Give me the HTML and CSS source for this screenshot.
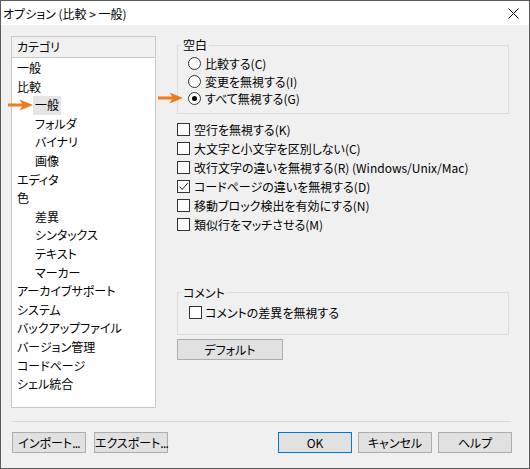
FILE: index.html
```html
<!DOCTYPE html>
<html>
<head>
    <meta charset="UTF-8">
    <title>オプション (比較 &gt; 一般)</title>
    <link rel="stylesheet" href="styles.css">
</head>
<body>
    <div class="window">
        <!-- Title bar -->
        <div class="titlebar">
            <span class="title">オプション (比較 &gt; 一般)</span>
            <svg class="close-icon" width="11" height="11" viewBox="0 0 11 11">
                <path d="M0.5 0.5 L10.5 10.5 M10.5 0.5 L0.5 10.5" stroke="#000" stroke-width="1" fill="none"/>
            </svg>
        </div>

        <div class="content">
            <div class="main">
                <!-- Category tree -->
                <div class="category">
                    <div class="category-header">カテゴリ</div>
                    <ul class="category-list">
                        <li>一般</li>
                        <li>比較</li>
                        <li class="sub"><span class="selected">一般</span></li>
                        <li class="sub">フォルダ</li>
                        <li class="sub">バイナリ</li>
                        <li class="sub">画像</li>
                        <li>エディタ</li>
                        <li>色</li>
                        <li class="sub">差異</li>
                        <li class="sub">シンタックス</li>
                        <li class="sub">テキスト</li>
                        <li class="sub">マーカー</li>
                        <li>アーカイブサポート</li>
                        <li>システム</li>
                        <li>バックアップファイル</li>
                        <li>バージョン管理</li>
                        <li>コードページ</li>
                        <li>シェル統合</li>
                    </ul>
                </div>

                <!-- Settings pane -->
                <div class="pane">
                    <fieldset class="group whitespace-group">
                        <legend>空白</legend>
                        <div class="radio-list">
                            <div class="option"><span class="radio"></span>比較する(C)</div>
                            <div class="option"><span class="radio"></span>変更を無視する(I)</div>
                            <div class="option"><span class="radio checked"></span>すべて無視する(G)</div>
                        </div>
                    </fieldset>

                    <div class="check-list">
                        <div class="option"><span class="checkbox"></span>空行を無視する(K)</div>
                        <div class="option"><span class="checkbox"></span>大文字と小文字を区別しない(C)</div>
                        <div class="option"><span class="checkbox"></span>改行文字の違いを無視する(R) (Windows/Unix/Mac)</div>
                        <div class="option"><span class="checkbox"><svg width="11" height="11" viewBox="0 0 11 11"><path d="M1.5 5.5 L4.2 8.5 L9.8 2" stroke="#222" stroke-width="1" fill="none"/></svg></span>コードページの違いを無視する(D)</div>
                        <div class="option"><span class="checkbox"></span>移動ブロック検出を有効にする(N)</div>
                        <div class="option"><span class="checkbox"></span>類似行をマッチさせる(M)</div>
                    </div>

                    <fieldset class="group comment-group">
                        <legend>コメント</legend>
                        <div class="comment-body">
                            <div class="option"><span class="checkbox"></span>コメントの差異を無視する</div>
                        </div>
                    </fieldset>

                    <button class="btn default-btn">デフォルト</button>
                </div>
            </div>

            <div class="separator"></div>

            <div class="footer">
                <button class="btn">インポート<span class="dots">...</span></button>
                <button class="btn export-btn">エクスポート<span class="dots">...</span></button>
                <button class="btn ok-btn">OK</button>
                <button class="btn">キャンセル</button>
                <button class="btn">ヘルプ</button>
            </div>
        </div>

        <!-- Orange annotation arrows -->
        <svg class="arrow arrow-tree" width="25" height="12" viewBox="0 0 25 12">
            <path d="M0 4.5 L14 4.5 L11.5 0.5 L25 6 L11.5 11.5 L14 7.5 L0 7.5 Z" fill="#ee7b1e"/>
        </svg>
        <svg class="arrow arrow-radio" width="25" height="12" viewBox="0 0 25 12">
            <path d="M0 4.5 L14 4.5 L11.5 0.5 L25 6 L11.5 11.5 L14 7.5 L0 7.5 Z" fill="#ee7b1e"/>
        </svg>
    </div>
</body>
</html>
```

FILE: styles.css
```css
body {
    margin: 0;
    font-family: "Noto Sans CJK JP", "Noto Sans", sans-serif;
    font-size: 12px;
    font-feature-settings: "palt";
    color: #000;
}

.window {
    position: relative;
    width: 530px;
    height: 469px;
    box-sizing: border-box;
    border: 1px solid #5a5a5a;
    background-color: #f0f0f0;
    display: flex;
    flex-direction: column;
}

.titlebar {
    height: 24px;
    background-color: #fff;
    display: flex;
    align-items: center;
    justify-content: space-between;
    padding: 0 10px 0 2px;
}

.close-icon {
    display: block;
}

.content {
    padding: 11px 10px 0 10px;
}

.main {
    display: flex;
    height: 372px;
}

/* category tree */
.category {
    width: 145px;
    box-sizing: border-box;
    border: 1px solid #c8c8c8;
    background-color: #fff;
    display: flex;
    flex-direction: column;
}

.category-header {
    height: 20px;
    line-height: 20px;
    padding-left: 5px;
    background-color: #f0f0f0;
    border-bottom: 1px solid #c8c8c8;
}

.category-list {
    list-style: none;
    margin: 0;
    padding: 1px 0 0 5px;
}

.category-list li {
    line-height: 18.6px;
    height: 18.6px;
    white-space: nowrap;
}

.category-list li.sub {
    padding-left: 18px;
}

.selected {
    display: inline-block;
    background-color: #e5e5e5;
    padding: 0 2px;
    margin-left: -2px;
}

/* settings pane */
.pane {
    margin-left: 21px;
    width: 332px;
}

.group {
    margin: 0;
    padding: 0;
    border: 1px solid #dcdcdc;
    min-width: 0;
}

.group legend {
    padding: 0 2px;
    margin-left: 3px;
    line-height: 14px;
}

.whitespace-group {
    margin-top: 2px;
}

.radio-list {
    padding: 3px 0 5px 10px;
}

.radio-list .option {
    height: 17.5px;
}

.option {
    display: flex;
    align-items: center;
    height: 19px;
    white-space: nowrap;
}

.radio {
    width: 13px;
    height: 13px;
    box-sizing: border-box;
    border: 1px solid #333;
    border-radius: 50%;
    background-color: #fff;
    margin-right: 4px;
    display: flex;
    align-items: center;
    justify-content: center;
}

.radio.checked::after {
    content: "";
    width: 5px;
    height: 5px;
    border-radius: 50%;
    background-color: #000;
}

.checkbox {
    width: 13px;
    height: 13px;
    box-sizing: border-box;
    border: 1px solid #333;
    background-color: #fff;
    margin-right: 4px;
    display: flex;
    align-items: center;
    justify-content: center;
}

.checkbox svg {
    display: block;
}

.check-list {
    margin-top: 6.5px;
}

.comment-group {
    margin-top: 51.5px;
}

.comment-body {
    padding: 3.5px 0 11.5px 11px;
}

.comment-body .checkbox {
    margin-right: 3px;
}

/* buttons */
.btn {
    font-family: inherit;
    font-size: 12px;
    font-feature-settings: "palt";
    color: #000;
    background-color: #e1e1e1;
    border: 1px solid #adadad;
    width: 74px;
    height: 21px;
    padding: 0;
    margin: 0;
    line-height: 19px;
    white-space: nowrap;
}

.dots {
    letter-spacing: -0.8px;
}

.default-btn {
    display: block;
    width: 106px;
    margin-top: 4px;
}

.separator {
    margin: 13px 0 0 1px;
    width: 499px;
    height: 1px;
    background-color: #d9d9d9;
}

.footer {
    display: flex;
    width: 500px;
    margin: 10px 0 0 1px;
    gap: 6px;
}

.export-btn {
    margin-left: 2px;
}

.ok-btn {
    margin-left: auto;
    border-color: #0078d7;
}

/* annotation arrows */
.arrow {
    position: absolute;
}

.arrow-tree {
    left: 7px;
    top: 98px;
}

.arrow-radio {
    left: 157px;
    top: 91px;
}
```
